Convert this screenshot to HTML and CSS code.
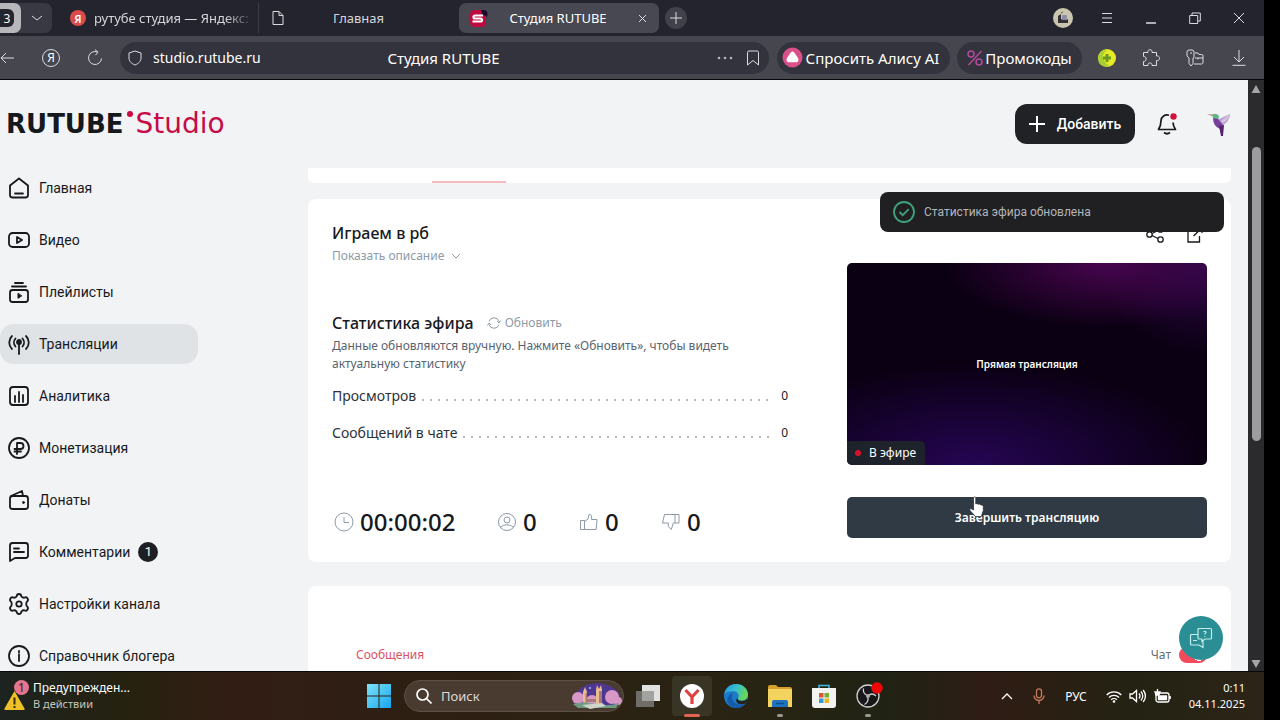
FILE: index.html
```html
<!DOCTYPE html>
<html lang="ru">
<head>
<meta charset="utf-8">
<title>Студия RUTUBE</title>
<link rel="stylesheet" href="styles.css">
</head>
<body>
<div class="window">
  <header class="tabbar">
    <div class="tab-group">
      <button class="group-count" aria-label="Группа вкладок"><span class="group-hex">3</span></button>
      <button class="group-menu" aria-label="Список вкладок"><svg width="12" height="12" viewBox="0 0 12 12"><path d="M1 4l5 4 5-4"/></svg></button>
    </div>
    <button class="tab tab-search"><span class="favicon-ya">Я</span><span class="tab-label tab-fade">рутубе студия — Яндекс:</span></button>
    <button class="tab tab-home"><svg width="12" height="16" viewBox="0 0 12 16"><path d="M1 1.500h6l4 4v9H1zM7 1.500v4h4"/></svg><span class="tab-label">Главная</span></button>
    <div class="tab tab-active">
      <svg class="favicon-studio" width="19" height="17" viewBox="0 0 19 17"><circle cx="14.500" cy="4" r="4" fill="#1b0a2a" stroke="none"/><path d="M6 0h6q0 5 5 6v6q0 5-5 5H6q-5 0-5-5V5q0-5 5-5z" fill="#c00a3f" stroke="none"/><path d="M14 5.500H6a1.500 1.500 0 0 0 0 3h5.500a1.500 1.500 0 0 1 0 3H3.500" stroke="#fff" stroke-width="2.200" fill="none"/></svg>
      <span class="tab-label">Студия RUTUBE</span>
      <button class="tab-close" aria-label="Закрыть вкладку"><svg width="9" height="9" viewBox="0 0 9 9"><path d="M1 1l7 7M8 1L1 8"/></svg></button>
    </div>
    <button class="tab-new" aria-label="Новая вкладка"><svg width="12" height="12" viewBox="0 0 12 12"><path d="M6 0v12M0 6h12"/></svg></button>
    <div class="window-controls">
      <button aria-label="Профиль"><svg width="20" height="20" viewBox="0 0 20 20"><circle cx="10" cy="10" r="10" fill="#c9c5ae" stroke="none"/><path d="M5 8l3-2v5l5 1 2-1v4H5z" fill="#343234" stroke="none"/><rect x="9" y="7" width="5" height="5" rx="1" fill="#8d8ba8" stroke="none"/><path d="M8 5l2-1" stroke="#555"/></svg></button>
      <button aria-label="Меню"><svg width="10" height="10" viewBox="0 0 10 10"><path d="M0 .5h10M0 5h10M0 9.500h10"/></svg></button>
      <button aria-label="Свернуть"><svg width="12" height="12" viewBox="0 0 12 12"><path d="M1 11h10" stroke-width="1.500"/></svg></button>
      <button aria-label="Развернуть"><svg width="12" height="12" viewBox="0 0 12 12"><path d="M.7 3.500h8v8h-8zM3 3.500V1h8.300v8H9"/></svg></button>
      <button aria-label="Закрыть"><svg width="10" height="10" viewBox="0 0 10 10"><path d="M0 0l10 10M10 0L0 10"/></svg></button>
    </div>
  </header>

  <nav class="toolbar" aria-label="Браузер">
    <div class="nav-buttons">
      <button aria-label="Назад"><svg width="14" height="12" viewBox="0 0 14 12"><path d="M14 6H1M6 1L1 6l5 5"/></svg></button>
      <button aria-label="Яндекс"><span class="ya-ring">Я</span></button>
      <button aria-label="Обновить страницу"><svg width="16" height="17" viewBox="0 0 16 17"><path d="M14.500 9.500a6.500 6.500 0 1 1-4-6.500M8 .5l3 2.700-2.500 3"/></svg></button>
    </div>
    <div class="address">
      <div class="address-site"><svg width="14" height="16" viewBox="0 0 14 16"><path d="M7 1l6 2v5c0 3.500-2.500 5.500-6 7-3.500-1.500-6-3.500-6-7V3z"/></svg><span>studio.rutube.ru</span></div>
      <div class="address-title">Студия RUTUBE</div>
      <div class="address-tools">
        <button aria-label="Ещё"><svg class="dots" width="16" height="4" viewBox="0 0 16 4"><circle cx="2" cy="2" r="1.300"/><circle cx="8" cy="2" r="1.300"/><circle cx="14" cy="2" r="1.300"/></svg></button>
        <button aria-label="В закладки"><svg width="14" height="16" viewBox="0 0 14 16"><path d="M1.500 2.500q0-1.500 1.500-1.500h8q1.500 0 1.500 1.500V15L7 10.500 1.500 15z"/></svg></button>
      </div>
    </div>
    <button class="pill pill-alice"><svg width="21" height="21" viewBox="0 0 21 21"><circle cx="10.500" cy="10.500" r="10" fill="#dc508a" stroke="none"/><path d="M10.500 4.500c1 0 1.700.8 2.500 2l2.800 4.200c1.500 2.500.3 4.500-2 4.500H7.200c-2.300 0-3.500-2-2-4.500L8 6.500c.8-1.200 1.500-2 2.500-2z" fill="#fff" stroke="none"/></svg>Спросить Алису AI</button>
    <button class="pill pill-promo"><svg width="16" height="16" viewBox="0 0 16 16"><g stroke="#b5489f" stroke-width="1.500"><circle cx="4" cy="4" r="3"/><circle cx="12" cy="12" r="3"/><path d="M14.500 1L1.500 15"/></g></svg>Промокоды</button>
    <div class="extensions">
      <button aria-label="Расширение"><svg width="20" height="20" viewBox="0 0 20 20"><circle cx="10" cy="10" r="9" fill="#e6ea27" stroke="none"/><path d="M2 15q-2-7 3-12l5-1q-5 4-4 8t6 8q-6 2-10-3z" fill="#a4cf35" stroke="none"/><path d="M10 6v8M6 10h8" stroke="#6b9b1e" stroke-width="3"/></svg></button>
      <button aria-label="Расширения"><svg width="20" height="18" viewBox="0 0 20 18"><path d="M2.500 3.500H7C5.800-.2 12.200-.2 11 3.500h4.500V7c4-1 4 5.500 0 4.500v5H11c.8-3.500-4.800-3.500-4 0H2.500v-4c3.500.5 3.500-5.500 0-5z"/></svg></button>
      <button aria-label="Пароли"><svg width="18" height="18" viewBox="0 0 18 18"><path d="M8 8.500V3q0-2-2-2H3Q1 1 1 3v4l2 2v5.500L5 17l2-2.500V9zM4 4h2M9 4h3l1 1.500h2.500q1.500 0 1.500 1.500v6.500q0 1.500-1.500 1.500H8M9 9h8M12 9v1.500"/></svg></button>
      <button aria-label="Загрузки"><svg width="14" height="16" viewBox="0 0 14 16"><path d="M7 0v12M2 7l5 5 5-5M.5 15.300h13"/></svg></button>
    </div>
  </nav>

  <div class="viewport">
    <div class="page">
      <header class="page-head">
        <a class="logo" href="#"><span class="logo-main">RUTUBE</span><span class="logo-dot"></span><span class="logo-sub">Studio</span></a>
        <div class="head-actions">
          <button class="add-button"><svg width="16" height="16" viewBox="0 0 16 16"><path d="M8 0v16M0 8h16"/></svg>Добавить</button>
          <button class="bell" aria-label="Уведомления"><svg width="22" height="24" viewBox="0 0 22 24"><path d="M13 3.200a6 6 0 0 0-8 5.600c0 4-.7 6-2.500 8.700h17c-1.500-2.200-2.400-4-2.500-7" fill="none" stroke="#17191d" stroke-width="1.700" stroke-linejoin="round"/><path d="M8 20.500q3 2.500 6 0" fill="none" stroke="#17191d" stroke-width="1.700"/><circle cx="17.500" cy="4.500" r="3.200" fill="#d1123f"/></svg></button>
          <button class="bird" aria-label="Профиль канала"><svg width="26" height="26" viewBox="0 0 26 26"><path d="M1 3l8 1v2z" fill="#c25c45"/><path d="M6 4q4-3 7 1l-1 6-4-2z" fill="#63b58a"/><path d="M11 9l13-6q0 7-8 12z" fill="#b9a2cf"/><path d="M15 10l9-7q-1 5-7 9z" fill="#d8c2df"/><path d="M7 7q0 8 7 11l3-4-5-6z" fill="#76409a"/><path d="M13 15l5-1-1 11h-2z" fill="#54236c"/></svg></button>
        </div>
      </header>

      <div class="page-body">
        <aside class="sidebar">
          <a class="side-link" href="#"><svg width="24" height="24" viewBox="0 0 24 24"><path d="M3 9.500L12 2.500l9 7V19q0 2.500-2.500 2.500h-13Q3 21.500 3 19zM8 17.500h8"/></svg>Главная</a>
          <a class="side-link" href="#"><svg width="24" height="24" viewBox="0 0 24 24"><rect x="2" y="5" width="20" height="14" rx="3.500"/><path d="M10 9v6l5-3z"/></svg>Видео</a>
          <a class="side-link" href="#"><svg width="24" height="24" viewBox="0 0 24 24"><rect x="3" y="10" width="18" height="12" rx="2.500"/><path d="M5 6.500h14M8 3h8"/><path d="M11 13.700v4.600l3.500-2.300z" fill="#17191d" stroke-width="1"/></svg>Плейлисты</a>
          <a class="side-link side-active" href="#" aria-current="page"><svg width="24" height="24" viewBox="0 0 24 24"><path d="M12 10v12M5 4a9 9 0 0 0 0 13M8.500 6.500a6 6 0 0 0 0 8M19 4a9 9 0 0 1 0 13M15.500 6.500a6 6 0 0 1 0 8"/><circle cx="12" cy="10" r="2" fill="#17191d"/></svg>Трансляции</a>
          <a class="side-link" href="#"><svg width="24" height="24" viewBox="0 0 24 24"><rect x="3" y="3" width="18" height="18" rx="3"/><path d="M8 12v6M12 8v10M16 11v7"/></svg>Аналитика</a>
          <a class="side-link" href="#"><svg width="24" height="24" viewBox="0 0 24 24"><circle cx="12" cy="12" r="10"/><path d="M10 18V7h3.500a3 3 0 0 1 0 6H7.500M7.500 15.500H14"/></svg>Монетизация</a>
          <a class="side-link" href="#"><svg width="24" height="24" viewBox="0 0 24 24"><rect x="3" y="8" width="18" height="13" rx="2.500"/><path d="M4 8l11-5 1 5"/><circle cx="16.500" cy="14.500" r="1" fill="#17191d" stroke-width="1"/></svg>Донаты</a>
          <a class="side-link" href="#"><svg width="24" height="24" viewBox="0 0 24 24"><path d="M3 21V5.500Q3 3 5.500 3h13Q21 3 21 5.500v10q0 2.500-2.500 2.500H8zM7 8.500h5M7 12h10"/></svg>Комментарии<span class="count">1</span></a>
          <a class="side-link" href="#"><svg width="24" height="24" viewBox="0 0 24 24"><path d="M12 2c1.400 0 2.200.8 2.500 2.700 1 .9 1.700 1.200 2.700 1 1.700-.8 2.800-.5 3.500.9s.4 2.300-1.100 3.500c-.5 1.200-.5 2.600 0 3.800 1.500 1.200 1.800 2.100 1.100 3.500s-1.800 1.700-3.500.9c-1-.2-1.700.1-2.700 1C14.200 21.200 13.400 22 12 22s-2.200-.8-2.500-2.700c-1-.9-1.700-1.200-2.700-1-1.700.8-2.800.5-3.500-.9s-.4-2.300 1.100-3.500c.5-1.200.5-2.600 0-3.800C2.900 8.900 2.600 8 3.300 6.600s1.800-1.700 3.500-.9c1 .2 1.700-.1 2.700-1C9.800 2.800 10.600 2 12 2z"/><circle cx="12" cy="12" r="2.700"/></svg>Настройки канала</a>
          <a class="side-link" href="#"><svg width="24" height="24" viewBox="0 0 24 24"><circle cx="12" cy="12" r="10"/><path d="M12 10.500v6.500M12 7v1.500"/></svg>Справочник блогера</a>
        </aside>

        <main class="content">
          <div class="tabs-card"><span class="tabs-underline"></span></div>

          <section class="card stream">
            <div class="stream-info">
              <h1 class="stream-title">Играем в рб</h1>
              <button class="describe">Показать описание<svg width="8" height="6" viewBox="0 0 8 6"><path d="M0 1l4 4 4-4"/></svg></button>
              <div class="stats-head"><h2>Статистика эфира</h2><button class="refresh"><svg width="14" height="14" viewBox="0 0 14 14"><path d="M2 5.500a5.200 5.200 0 0 1 10 0M12 8.500a5.200 5.200 0 0 1-10 0M10 5l2 2 1.500-2.500M4 9L2 7 .5 9.500"/></svg>Обновить</button></div>
              <p class="stats-note">Данные обновляются вручную. Нажмите «Обновить», чтобы видеть актуальную статистику</p>
              <dl class="stats">
                <div class="stat"><dt>Просмотров</dt><dd>0</dd></div>
                <div class="stat"><dt>Сообщений в чате</dt><dd>0</dd></div>
              </dl>
              <div class="counters">
                <span class="counter counter-time"><svg width="20" height="20" viewBox="0 0 20 20"><circle cx="10" cy="10" r="9"/><path d="M10 5v5.500h5"/></svg>00:00:02</span>
                <span class="counter"><svg width="20" height="20" viewBox="0 0 20 20"><circle cx="10" cy="10" r="8.500"/><circle cx="10" cy="8" r="3"/><path d="M3.500 15q6.500-4.500 13 0"/></svg>0</span>
                <span class="counter"><svg width="20" height="20" viewBox="0 0 20 20"><path d="M1.500 8.500h4v9h-4zM5.500 9.500L9 7l1-4.500c2-.5 3 1 2.500 5H18l-.8 10H5.500"/></svg>0</span>
                <span class="counter"><svg width="20" height="20" viewBox="0 0 20 20"><path d="M14 2.500h4v8.500h-4zM14 2.500H3.500L1.500 11h5.800v3.500l3 3 2-6.500H14"/></svg>0</span>
              </div>
            </div>
            <div class="stream-side">
              <div class="side-tools">
                <button aria-label="Поделиться"><svg width="20" height="20" viewBox="0 0 20 20"><circle cx="4.500" cy="9.500" r="2.700"/><circle cx="15.500" cy="4.500" r="2.700"/><circle cx="15.500" cy="14.500" r="2.700"/><path d="M7 8.500l6-3M7 10.500l6 3"/></svg></button>
                <button aria-label="Открыть"><svg width="20" height="20" viewBox="0 0 20 20"><path d="M9 5.500H4V17h11.500v-6M9.500 11L18 3M13 3h5v5"/></svg></button>
              </div>
              <div class="preview"><span>Прямая трансляция</span><div class="live">В эфире</div></div>
              <button class="finish">Завершить трансляцию</button>
            </div>
          </section>

          <section class="card chat">
            <button class="chat-tab">Сообщения</button>
            <label class="chat-toggle">Чат<input type="checkbox" class="switch" checked></label>
          </section>
        </main>
      </div>

      <div class="toast" role="status"><svg width="24" height="24" viewBox="0 0 24 24"><circle cx="12" cy="12" r="10"/><path d="M7.500 12l3.200 3.200 6-6"/></svg>Статистика эфира обновлена</div>
      <button class="support" aria-label="Поддержка"><svg width="24" height="22" viewBox="0 0 24 22"><path d="M10 1.500h11.500q1 0 1 1V11q0 1-1 1H16l-3 2.500V12h-3q-1 0-1-1V2.500q0-1 1-1zM9 7.500H2.500q-1 0-1 1V17q0 1 1 1H10l4 2.500V14.500M4 13.500h4"/><path d="M14.500 5q1.500-1.500 2.500 0c.5 1-1.200 1.200-1.200 2.500M15.800 9v1"/></svg></button>
      <svg class="cursor" width="18" height="22" viewBox="0 0 18 22"><path d="M5.500 1.500q1.500-1.500 2.300 0V8l1-.5 1.500.8 1.500-.3 1.200 1 1.500 0 .8 1.300v4.200l-2 6H7.500L2 14.500q-.8-1.800 1-2l2.500 1.500z" fill="#fff" stroke="#26303a" stroke-width=".8"/></svg>
    </div>
    <div class="scrollbar">
      <svg width="10" height="8" viewBox="0 0 10 8"><path d="M5 0l4.500 8h-9z"/></svg>
      <div class="scroll-track"><div class="scroll-thumb"></div></div>
      <svg width="10" height="8" viewBox="0 0 10 8"><path d="M5 8L.5 0h9z"/></svg>
    </div>
  </div>

  <footer class="taskbar">
    <button class="widget">
      <svg width="28" height="32" viewBox="0 0 28 32"><path d="M11.500 11L21.500 28.500Q22 30 20.500 30H2.500Q1 30 1.500 28.500z" fill="#edc127"/><path d="M11.500 17.500v7M11.500 26v2" stroke="#392b08" stroke-width="2"/><circle cx="18.500" cy="7.500" r="7.500" fill="#e5748e"/><text x="18.500" y="12" text-anchor="middle" class="badge-num">1</text></svg>
      <span><b>Предупрежден...</b><small>В действии</small></span>
    </button>
    <div class="tasks">
      <button class="task" aria-label="Пуск"><svg width="24" height="24" viewBox="0 0 24 24"><defs><linearGradient id="win" x1="0" y1="0" x2="1" y2="1"><stop offset="0" stop-color="#7ce3f8"/><stop offset="1" stop-color="#18a5ee"/></linearGradient></defs><path d="M0 0h11.500v11.500H0zM12.500 0H24v11.500H12.500zM0 12.500h11.500V24H0zM12.500 12.500H24V24H12.500z" fill="url(#win)"/></svg></button>
      <label class="search"><svg width="16" height="16" viewBox="0 0 16 16"><circle cx="6.500" cy="6.500" r="5.500"/><path d="M10.500 10.500l5 5"/></svg><input type="text" placeholder="Поиск" aria-label="Поиск">
        <svg class="castle" width="52" height="26" viewBox="0 0 52 26"><path d="M6 10Q14 0 27 0t22 10q4 10-4 13H6Q0 18 6 10z" fill="#4d3792"/><g fill="#d997c6"><circle cx="8" cy="15" r="6"/><circle cx="42" cy="14" r="7"/><circle cx="22" cy="18" r="6"/><circle cx="48" cy="18" r="4"/></g><path d="M13 23V9l2-5 2 5v14zM26 23V7l1-5 2 4 2-4 1 5v16z" fill="#e7bd8e"/><path d="M29 23V8h3v15zM15.500 23V10H17v13zM17 16h9v3h-9z" fill="#a77a79"/><path d="M3 21q10-3 22 0t24-1l-3 5H8z" fill="#6f9b83"/><path d="M12 22l20-2 4 3-16 3z" fill="#cfd6c8"/><circle cx="20" cy="5" r="1" fill="#a9b9fa"/></svg></label>
      <button class="task" aria-label="Представление задач"><svg width="26" height="24" viewBox="0 0 26 24"><rect x="7" y="1" width="18" height="16" fill="#e1e1df"/><rect x="1" y="7" width="18" height="16" fill="#767572" opacity=".9"/><rect x="7" y="7" width="12" height="10" fill="#a2a2a0"/></svg></button>
      <button class="task task-active" aria-label="Яндекс Браузер"><svg width="24" height="24" viewBox="0 0 24 24"><circle cx="12" cy="12" r="12" fill="#fff"/><path d="M5.500 6l6.500 7 6.500-7M12 12.500V20" fill="none" stroke="#df423f" stroke-width="3.200"/></svg></button>
      <button class="task" aria-label="Edge"><svg width="24" height="24" viewBox="0 0 24 24"><defs><linearGradient id="edge" x1="0" y1="0" x2="1" y2=".4"><stop offset="0" stop-color="#2394de"/><stop offset=".5" stop-color="#35bfd2"/><stop offset="1" stop-color="#66d65c"/></linearGradient></defs><circle cx="12" cy="12" r="12" fill="#1b7bc9"/><path d="M.3 10C1.500 4 6 0 12 0c7 0 12 5 12 10.500 0 4-3 6-6.500 6-2.500 0-4-1-3.500-2.500 1.500-2 .5-6-3-6.500C6 6.500 2 8 .3 10z" fill="url(#edge)"/><path d="M9 9c-3 6 1 12 8 11.500 2 0 3.500-.7 5-1.500-5 7-15 6-18 0C2 14 5 9.500 9 9z" fill="#145cab"/><path d="M14 14q-1 3 4 3 4 0 5.500-3 0 3-2 5.500-7 2-9-1.500-1-3 1.500-4z" fill="#272417"/></svg></button>
      <button class="task task-open" aria-label="Проводник"><svg width="26" height="24" viewBox="0 0 26 24"><path d="M1 3q0-2 2-2h6l2 2h12q2 0 2 2v18H1z" fill="#d6a02e"/><path d="M1 5h24v18H1z" fill="#f4d45f"/><path d="M5 23v-5q0-2 2-2h12q2 0 2 2v5z" fill="#1e74be"/><path d="M9 19.500h8" stroke="#0b4c8e" stroke-width="1.500"/></svg></button>
      <button class="task" aria-label="Магазин"><svg width="24" height="24" viewBox="0 0 24 24"><path d="M7 5V1.500h10V5" fill="none" stroke="#42b8df" stroke-width="1.500"/><path d="M0 4h24v17q0 3-3 3H3q-3 0-3-3z" fill="#f2f2f0"/><path d="M7 9h4.500v4.500H7z" fill="#dc5535"/><path d="M12.500 9H17v4.500h-4.500z" fill="#77ae35"/><path d="M7 14.500h4.500V19H7z" fill="#3198d6"/><path d="M12.500 14.500H17V19h-4.500z" fill="#ebb42b"/></svg></button>
      <button class="task task-open" aria-label="OBS Studio"><svg width="30" height="28" viewBox="0 0 30 28"><circle cx="15" cy="14" r="11" fill="#17171a" stroke="#d0d0d0" stroke-width="1.300"/><path d="M14.500 13.500q-5-2-4-7M15 14q4-4 8 0M14.500 14.500q2 5-3 8" fill="none" stroke="#cfcfcf" stroke-width="1.300"/><circle cx="15" cy="14" r="2" fill="#aaa"/><circle cx="24" cy="6" r="5.800" fill="#ee0707"/></svg></button>
    </div>
    <div class="tray">
      <button aria-label="Скрытые значки"><svg width="12" height="8" viewBox="0 0 12 8"><path d="M1 7l5-5 5 5"/></svg></button>
      <button aria-label="Микрофон"><svg width="12" height="16" viewBox="0 0 12 16"><g stroke="#c67b5b"><rect x="3.500" y=".8" width="5" height="9" rx="2.500"/><path d="M1 7.500a5 5 0 0 0 10 0M6 12.500V16"/></g></svg></button>
      <button class="lang">РУС</button>
      <button class="tray-group" aria-label="Сеть, звук и батарея">
        <svg width="16" height="13" viewBox="0 0 16 13"><path d="M.7 5a10.300 10.300 0 0 1 14.600 0M3 7.500a7 7 0 0 1 10 0M5.200 9.800a4 4 0 0 1 5.600 0"/><circle cx="8" cy="11.500" r="1.300" fill="#fff" stroke="none"/></svg>
        <svg width="18" height="14" viewBox="0 0 18 14"><path d="M1 5h2.500L7.500 1.500v11L3.500 9H1zM10 4.500q2 2.500 0 5M12 2.500q3.500 4.500 0 9M14.200 1q4.500 6 0 12"/></svg>
        <svg width="17" height="14" viewBox="0 0 17 14"><rect x="2" y="4" width="13" height="9" rx="2"/><path d="M4.500 7h8v3.500h-8z" fill="#fff"/><path d="M16 7v3" stroke-width="1.700"/><path d="M3.500 0v4M1 3h5l-1 3H2z" fill="#fff"/></svg>
      </button>
      <button class="clock"><span>0:11</span><span>04.11.2025</span></button>
    </div>
  </footer>
</div>
</body>
</html>
```
FILE: styles.css
```css
* { box-sizing: border-box; }
body { margin: 0; background: #000; font-family: "Noto Sans", "Open Sans", sans-serif; }
button { margin: 0; padding: 0; border: 0; background: none; color: inherit; font: inherit; display: flex; align-items: center; justify-content: center; }
a { color: inherit; text-decoration: none; }
h1, h2, p, dl, dd { margin: 0; }
svg { flex: none; display: block; }

.window { height: 100vh; margin-right: 16px; display: flex; flex-direction: column; overflow: hidden; }

/* Browser tabs */
.tabbar { height: 36px; flex: none; display: flex; align-items: center; background: #24242e; color: #d6d6da; font-size: 13px; }
.tabbar svg, .toolbar svg { fill: none; stroke: #dcdce0; }
.tab-group { display: flex; width: 52px; height: 30px; background: #393943; border-radius: 0 7px 7px 0; }
.group-count { width: 21px; justify-content: flex-start; background: #b7b7bb; border-radius: 0 7px 7px 0; }
.group-hex { width: 14px; height: 18px; display: grid; place-items: center; background: #25252d; color: #fff; border-radius: 0 6px 6px 0; font-size: 12px; }
.group-menu { flex: 1; }
.tab { height: 30px; gap: 8px; }
.tab-search { width: 207px; padding-left: 18px; justify-content: flex-start; border-right: 1px solid #3c3c46; }
.favicon-ya { flex: none; width: 16px; height: 16px; border-radius: 50%; background: #dc4b4b; color: #fff; display: grid; place-items: center; font-size: 11px; font-weight: 600; }
.tab-fade { flex: 1; white-space: nowrap; text-align: left; mask-image: linear-gradient(90deg, #000 80%, transparent 98%); }
.tab-home { width: 200px; padding-left: 13px; justify-content: flex-start; }
.tab-home .tab-label { flex: 1; padding-right: 34px; }
.tab-active { width: 200px; display: flex; align-items: center; padding: 0 12px 0 10px; background: #484852; border-radius: 7px; color: #fff; }
.tab-active .tab-label { flex: 1; padding-right: 10px; text-align: center; }
.tab-new { width: 22px; height: 22px; margin-left: 6px; border-radius: 50%; background: #41414b; }
.window-controls, .extensions { display: flex; margin-left: auto; margin-right: 3px; }
.window-controls button, .extensions button, .nav-buttons button { width: 44px; height: 30px; }

/* Address bar */
.toolbar { height: 44px; flex: none; display: flex; align-items: center; background: #46464f; border-bottom: 1px solid #08080c; color: #fff; font-size: 15px; }
.nav-buttons { display: flex; margin-left: -15px; margin-right: 3px; }
.ya-ring { width: 18px; height: 18px; border: 1px solid #dcdce0; border-radius: 50%; display: grid; place-items: center; font-size: 12px; line-height: 16px; }
.address { flex: 1; height: 32px; margin-right: 8px; padding: 0 2px 0 8px; display: grid; grid-template-columns: 1fr auto 1fr; align-items: center; background: #33333d; border-radius: 16px; font-size: 14px; }
.address-site { display: flex; align-items: center; gap: 11px; }
.address-title { font-size: 15px; padding-right: 8px; }
.address-tools { display: flex; justify-content: flex-end; }
.address-tools button { width: 28px; height: 28px; }
.toolbar .dots { fill: #b5b5bb; stroke: none; }
.pill { height: 32px; border-radius: 16px; background: #33333d; margin-right: 7px; white-space: nowrap; }
.pill-alice { width: 173px; padding-right: 6px; gap: 3px; }
.pill-promo { width: 125px; gap: 2px; }
.extensions { margin-left: -4px; }

/* Page area */
.viewport { flex: 1; min-height: 0; display: flex; border-bottom: 1px solid #08080c; }
.page { position: relative; flex: 1; min-width: 0; overflow: hidden; background: #f1f3f5; color: #17191d; }
.page-head { height: 88px; padding: 0 9px 0 6px; display: flex; align-items: center; justify-content: space-between; }
.logo { display: flex; align-items: center; font-family: "DejaVu Sans", sans-serif; line-height: 30px; }
.logo-main { font-size: 26px; font-weight: 700; color: #16181b; }
.logo-dot { width: 6px; height: 6px; margin: 0 3px 20px; border-radius: 50%; background: #c90a43; }
.logo-sub { font-size: 28px; color: #c50c48; }
.head-actions { display: flex; align-items: center; }
.add-button { width: 120px; height: 40px; gap: 12px; border-radius: 12px; background: #202226; color: #fff; font: 500 14px Roboto, sans-serif; }
.add-button svg { stroke: #fff; stroke-width: 2; }
.bell { width: 64px; height: 40px; }
.bird { width: 40px; height: 40px; }
.page-body { display: flex; }
.sidebar { width: 308px; flex: none; display: flex; flex-direction: column; align-items: flex-start; gap: 12px; font: 14px/20px Roboto, sans-serif; }
.side-link { width: 198px; height: 40px; padding-left: 7px; display: flex; align-items: center; gap: 8px; }
.side-link svg { fill: none; stroke: #17191d; stroke-width: 1.8; stroke-linecap: round; stroke-linejoin: round; }
.side-active { background: #dfe3e6; border-radius: 14px; }
.count { width: 20px; height: 20px; border-radius: 50%; background: #1d1f23; color: #fff; display: grid; place-items: center; font-size: 13px; }
.content { flex: 1; min-width: 0; margin-right: 17px; }
.tabs-card { height: 15px; padding-left: 124px; display: flex; align-items: flex-end; background: #fff; border-radius: 0 0 6px 6px; }
.tabs-underline { width: 74px; height: 2px; background: #f5b9bf; }
.card { background: #fff; border-radius: 8px; }
.stream { margin-top: 16px; padding: 24px; display: flex; justify-content: space-between; }
.stream-info { width: 456px; display: flex; flex-direction: column; align-items: flex-start; }
.stream-title, .stats-head h2 { font-size: 16px; line-height: 20px; font-weight: 500; }
.describe { gap: 8px; margin-top: 3px; color: #8d9aa8; font-size: 12px; line-height: 20px; }
.describe svg, .refresh svg, .counter svg { fill: none; stroke: #8d9aa8; }
.stats-head { margin-top: 47px; display: flex; align-items: center; gap: 13px; }
.refresh { gap: 4px; color: #8d9aa8; font-size: 12px; line-height: 20px; }
.stats-note { margin-top: 4px; font-size: 12px; line-height: 18px; color: #59636f; }
.stats { align-self: stretch; margin-top: 13px; display: grid; gap: 17px; }
.stat { display: flex; align-items: center; font-size: 14px; line-height: 20px; color: #2e3237; }
.stat::after { content: ""; order: 1; flex: 1; height: 2px; margin: 7px 8px 0 3px; background: radial-gradient(circle, #b5bac0 1px, transparent 1px) 0 0 / 8px 2px; }
.stat dd { order: 2; font-size: 12px; color: #17191d; }
.counters { margin-top: auto; padding-left: 2px; display: flex; font-size: 24px; line-height: 32px; font-weight: 500; }
.counter { width: 82px; display: flex; align-items: center; gap: 6px; }
.counter-time { width: 163px; }
.stream-side { width: 360px; flex: none; }
.side-tools { height: 24px; display: flex; justify-content: flex-end; gap: 19px; padding-right: 3px; }
.side-tools svg { fill: none; stroke: #17191d; stroke-width: 1.3; }
.preview { position: relative; aspect-ratio: 25 / 14; margin: 16px 0 32px; display: grid; place-items: center; border-radius: 5px; overflow: hidden; color: #fff; font-size: 10px; font-weight: 600; background: radial-gradient(ellipse 45% 32% at 72% 0, #48054f, transparent), radial-gradient(ellipse 30% 45% at 100% 0, #2c0647, transparent), radial-gradient(ellipse 65% 50% at 35% 100%, #250553, transparent), #0b0013; }
.live { position: absolute; left: 0; bottom: 0; height: 24px; padding: 0 9px 0 8px; display: flex; align-items: center; gap: 8px; background: #1e222a; border-radius: 0 5px 0 0; font-size: 12px; font-weight: 400; }
.live::before { content: ""; width: 6px; height: 6px; border-radius: 50%; background: #dc1029; }
.finish { width: 100%; height: 41px; border-radius: 5px; background: #303a45; color: #fff; font-size: 12px; font-weight: 600; }
.chat { margin-top: 24px; padding: 58px 24px 24px 48px; display: flex; justify-content: space-between; align-items: center; font-size: 12px; line-height: 22px; }
.chat-tab { color: #dc5163; }
.chat-toggle { display: flex; align-items: center; gap: 8px; color: #666c75; }
.switch { appearance: none; width: 28px; height: 16px; margin: 0; border-radius: 8px; background: radial-gradient(circle 6px at 20px 8px, #fff 6px, transparent 6px), #f44b5c; }
.toast { position: absolute; top: 112px; right: 24px; width: 344px; height: 40px; padding-left: 12px; display: flex; align-items: center; gap: 8px; border-radius: 8px; background: #202022; color: #b3b5ba; font: 12px Roboto, sans-serif; }
.toast svg { fill: none; stroke: #3fa27b; stroke-width: 1.8; }
.support { position: absolute; right: 25px; bottom: 11px; width: 44px; height: 44px; border-radius: 50%; background: #2b8e95; }
.support svg { fill: none; stroke: #c3edec; stroke-width: 1.2; }
.cursor { position: absolute; left: 968px; top: 416px; }
.scrollbar { width: 16px; padding: 5px 0 3px; display: flex; flex-direction: column; align-items: center; gap: 6px; background: #2b2b2d; }
.scrollbar svg { fill: #a5a5a7; }
.scroll-track { flex: 1; padding-top: 48px; }
.scroll-thumb { width: 9px; height: 58%; border-radius: 5px; background: #9d9d9f; }

/* Taskbar */
.taskbar { height: 48px; flex: none; display: grid; grid-template-columns: 1fr auto 1fr; align-items: center; color: #fff; background: linear-gradient(90deg, #1d2320, #26220f 10%, #321d14 18%, #2d2013 38%, #282413 60%, #202314 70%, #2f1c14 78%, #242313 90%, #2c2417); font-size: 12px; }
.widget { justify-self: start; padding-left: 3px; gap: 2px; text-align: left; line-height: 16px; }
.badge-num { font: 12px "Noto Sans", sans-serif; fill: #3b1520; }
.widget b, .widget small { display: block; font-size: 12px; font-weight: 400; }
.widget small { color: #c6c5bc; font-size: 11px; }
.tasks { display: flex; align-items: center; margin-right: 17px; }
.task { position: relative; width: 44px; height: 44px; }
.task-active { width: 40px; height: 40px; margin: 0 2px; background: #393525; border-radius: 4px; }
.task-active::after, .task-open::after { content: ""; position: absolute; bottom: 1px; left: 50%; width: 6px; height: 3px; margin-left: -3px; border-radius: 2px; background: #999991; }
.task-active::after { bottom: -1px; width: 16px; margin-left: -8px; background: #e16352; }
.search { position: relative; width: 220px; height: 32px; margin: 0 2px 0 3px; padding-left: 11px; display: flex; align-items: center; gap: 9px; border: 1px solid #5d5044; border-radius: 16px; background: #493b30; overflow: hidden; }
.search svg { fill: none; stroke: #fff; stroke-width: 1.7; }
.search .castle { stroke: none; margin-right: 1px; }
.search input { flex: 1; min-width: 0; padding: 0; border: 0; outline: 0; background: none; color: #fff; font: 13px "Noto Sans", sans-serif; }
.search input::placeholder { color: #dedad6; opacity: 1; }
.tray { display: flex; align-items: center; justify-content: flex-end; padding-right: 19px; }
.tray button { height: 40px; }
.tray svg { fill: none; stroke: #fff; stroke-width: 1.3; }
.tray > button:nth-child(-n+2) { width: 32px; }
.tray .lang { width: 42px; }
.tray .tray-group { width: 82px; gap: 7px; }
.tray .clock { width: 66px; flex-direction: column; align-items: flex-end; line-height: 16px; font-size: 11px; }
```
